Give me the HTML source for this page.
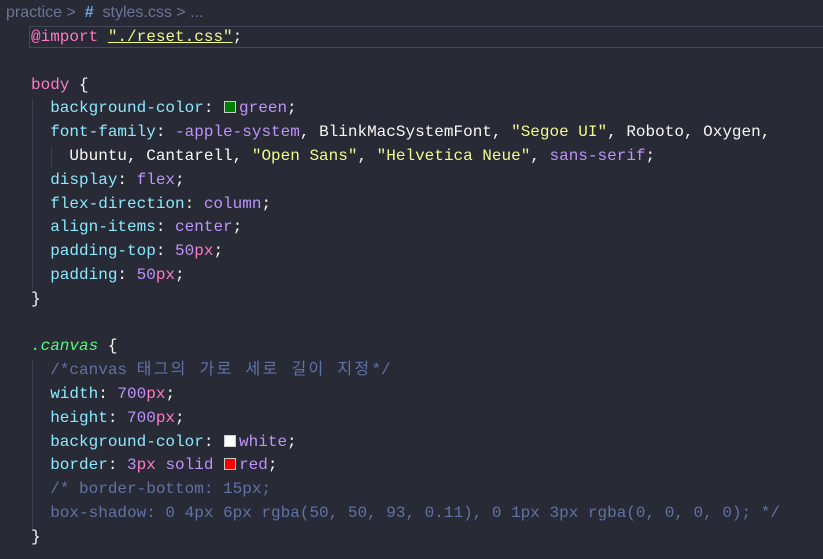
<!DOCTYPE html>
<html><head><meta charset="utf-8"><style>
html,body{margin:0;padding:0;background:#282a36;width:823px;height:559px;overflow:hidden}
.bc{position:absolute;left:6px;top:4px;font:16px "Liberation Sans",sans-serif;color:#6d7596;white-space:pre}
.bc b{color:#6fa8dc;font-weight:bold}
.code{position:absolute;left:31px;top:26px;font:16px/23.8px "Liberation Mono","Noto Sans CJK KR",monospace;color:#f8f8f2;white-space:pre}
.hl{position:absolute;left:29px;top:26px;width:800px;height:22px;border:1px solid #44475a;border-right:none;box-sizing:border-box}
.g{position:absolute;width:1px;background:#3d4050}
.p{color:#8be9fd}.v{color:#bd93f9}.n{color:#bd93f9}.u{color:#ff79c6}.s{color:#f1fa8c}.k{color:#ff79c6}.c{color:#6272a4}.cls{color:#50fa7b;font-style:italic}
.ko{letter-spacing:2.3px}
.sw{display:inline-block;width:12px;height:12px;border:1px solid #ccc;box-sizing:border-box;margin:0 3px 0 1px;vertical-align:-1px}
</style></head><body>
<div class="bc">practice &gt;  <b>#</b>  styles.css &gt; ...</div>
<div class="hl"></div>
<div class="g" style="left:32px;top:98px;height:192px"></div>
<div class="g" style="left:51px;top:146px;height:22px"></div>
<div class="g" style="left:32px;top:360px;height:170px"></div>
<div class="code"><span class="k">@import</span> <span class="s" style="text-decoration:underline">"./reset.css"</span>;

<span class="k">body</span> {
  <span class="p">background-color</span>: <span class="sw" style="background:#008000"></span><span class="v">green</span>;
  <span class="p">font-family</span>: <span class="v">-apple-system</span>, BlinkMacSystemFont, <span class="s">"Segoe UI"</span>, Roboto, Oxygen,
    Ubuntu, Cantarell, <span class="s">"Open Sans"</span>, <span class="s">"Helvetica Neue"</span>, <span class="v">sans-serif</span>;
  <span class="p">display</span>: <span class="v">flex</span>;
  <span class="p">flex-direction</span>: <span class="v">column</span>;
  <span class="p">align-items</span>: <span class="v">center</span>;
  <span class="p">padding-top</span>: <span class="n">50</span><span class="u">px</span>;
  <span class="p">padding</span>: <span class="n">50</span><span class="u">px</span>;
}

<span class="cls">.canvas</span> {
  <span class="c">/*canvas <span class="ko">태그의 가로 세로 길이 지정</span>*/</span>
  <span class="p">width</span>: <span class="n">700</span><span class="u">px</span>;
  <span class="p">height</span>: <span class="n">700</span><span class="u">px</span>;
  <span class="p">background-color</span>: <span class="sw" style="background:#fff"></span><span class="v">white</span>;
  <span class="p">border</span>: <span class="n">3</span><span class="u">px</span> <span class="v">solid</span> <span class="sw" style="background:#f00"></span><span class="v">red</span>;
  <span class="c">/* border-bottom: 15px;</span>
<span class="c">  box-shadow: 0 4px 6px rgba(50, 50, 93, 0.11), 0 1px 3px rgba(0, 0, 0, 0); */</span>
}</div>
</body></html>
